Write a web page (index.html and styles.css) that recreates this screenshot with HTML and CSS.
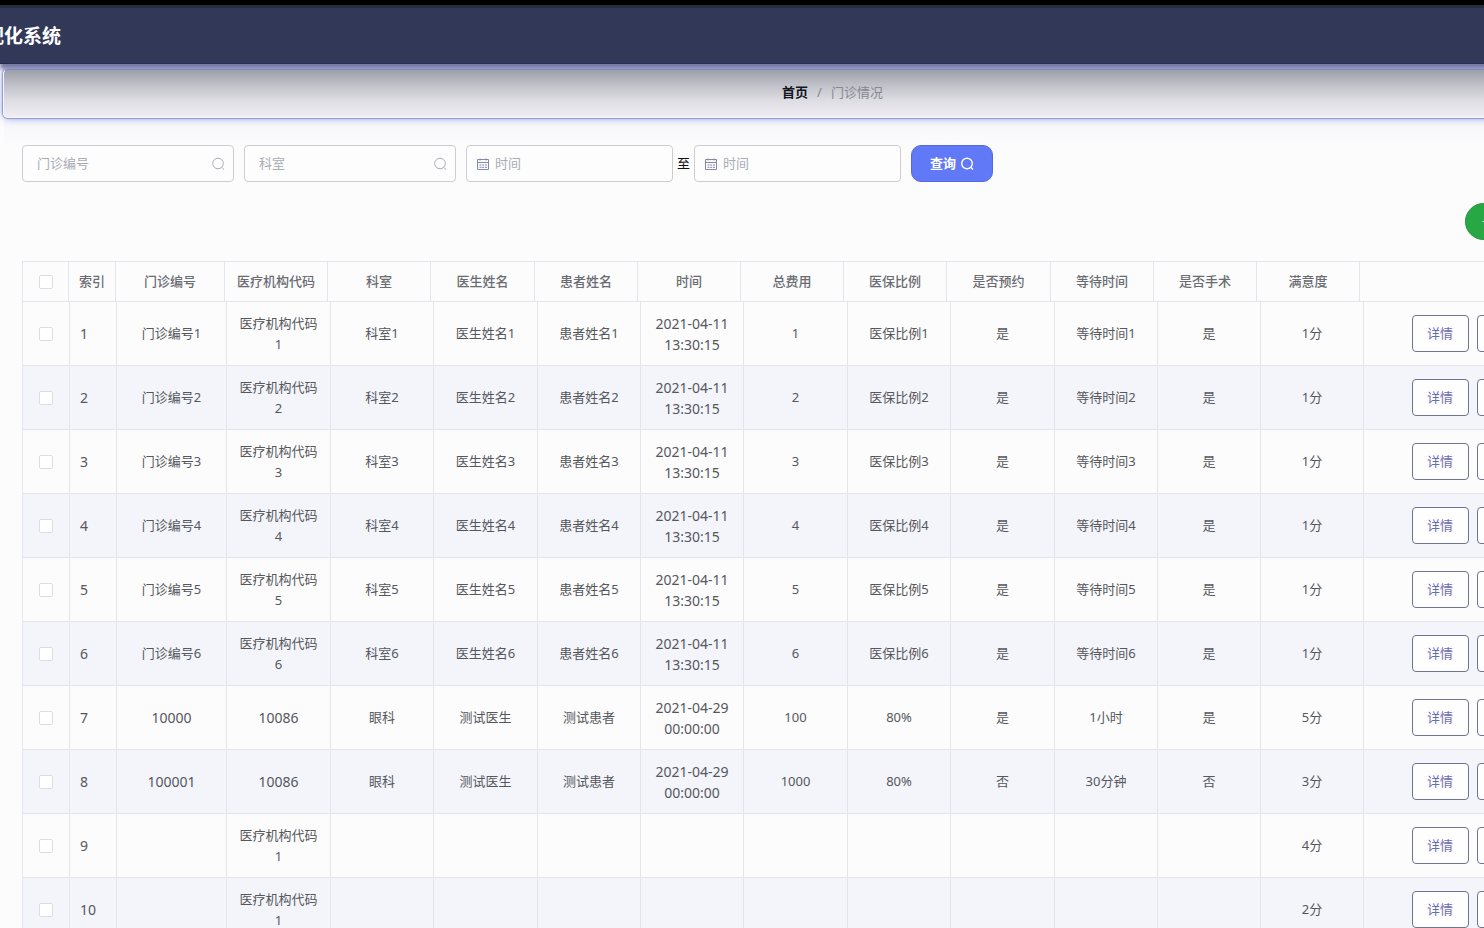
FILE: index.html
```html
<!DOCTYPE html>
<html lang="zh-CN">
<head>
  <meta charset="UTF-8">
  <meta name="viewport" content="width=device-width, initial-scale=1.0">
  <title>门诊情况</title>
  <link rel="stylesheet" href="styles.css">
</head>
<body>
  <div class="page">
    <header class="navbar">
      <h1 class="logo">视化系统</h1>
    </header>
    <nav class="breadcrumb">
      <a href="index.html">首页</a>
      <span class="separator">/</span>
      <span>门诊情况</span>
    </nav>
    <main>
      <form class="search-form">
        <div class="field">
          <input type="text" placeholder="门诊编号" aria-label="门诊编号">
          <svg class="icon" viewBox="0 0 14 14"><circle cx="7" cy="6.5" r="5.3"/><path d="M10.7 10.3L13 12.6"/></svg>
        </div>
        <div class="field">
          <input type="text" placeholder="科室" aria-label="科室">
          <svg class="icon" viewBox="0 0 14 14"><circle cx="7" cy="6.5" r="5.3"/><path d="M10.7 10.3L13 12.6"/></svg>
        </div>
        <div class="date-range">
          <div class="field date">
            <svg class="icon" viewBox="0 0 14 14"><path d="M1.5 2.5h11v10h-11zM1.5 5.5h11M4 1.5v2M10 1.5v2M3.5 8h2M6.2 8h2M9 8h2M3.5 10.3h2M6.2 10.3h2M9 10.3h2"/></svg>
            <input type="text" placeholder="时间" aria-label="开始时间">
          </div>
          <span>至</span>
          <div class="field date">
            <svg class="icon" viewBox="0 0 14 14"><path d="M1.5 2.5h11v10h-11zM1.5 5.5h11M4 1.5v2M10 1.5v2M3.5 8h2M6.2 8h2M9 8h2M3.5 10.3h2M6.2 10.3h2M9 10.3h2"/></svg>
            <input type="text" placeholder="时间" aria-label="结束时间">
          </div>
        </div>
        <button type="submit" class="btn-search">查询
          <svg class="icon" viewBox="0 0 14 14"><circle cx="7" cy="6.5" r="5.3"/><path d="M10.7 10.3L13 12.6"/></svg>
        </button>
      </form>
      <div class="toolbar">
        <button type="button" class="btn-add">+ 新增</button>
        <button type="button" class="btn-delete">删除</button>
      </div>
      <table class="table-head">
        <colgroup><col class="c-check"><col class="c-index"><col class="c-no"><col span="2" class="c-item"><col class="c-wide"><col span="4" class="c-item"><col class="c-wide"><col span="3" class="c-item"><col></colgroup>
        <thead>
          <tr>
            <th><input type="checkbox" aria-label="全选"></th><th class="index">索引</th><th>门诊编号</th><th>医疗机构代码</th><th>科室</th><th>医生姓名</th><th>患者姓名</th><th>时间</th><th>总费用</th><th>医保比例</th><th>是否预约</th><th>等待时间</th><th>是否手术</th><th>满意度</th><th></th>
          </tr>
        </thead>
      </table>
      <table class="table-body">
        <colgroup><col class="c-check"><col class="c-index"><col class="c-no"><col class="c-wide"><col class="c-item"><col class="c-wide"><col span="2" class="c-item"><col class="c-wide"><col class="c-item"><col class="c-wide"><col span="3" class="c-item"><col></colgroup>
        <tbody>
          <tr><td><input type="checkbox" aria-label="选择1"></td><td class="index">1</td><td>门诊编号1</td><td>医疗机构代码1</td><td>科室1</td><td>医生姓名1</td><td>患者姓名1</td><td class="num">2021-04-11 13:30:15</td><td>1</td><td>医保比例1</td><td>是</td><td>等待时间1</td><td>是</td><td>1分</td><td><div class="actions"><button type="button">详情</button><button type="button">修改</button><button type="button">删除</button></div></td></tr>
          <tr><td><input type="checkbox" aria-label="选择2"></td><td class="index">2</td><td>门诊编号2</td><td>医疗机构代码2</td><td>科室2</td><td>医生姓名2</td><td>患者姓名2</td><td class="num">2021-04-11 13:30:15</td><td>2</td><td>医保比例2</td><td>是</td><td>等待时间2</td><td>是</td><td>1分</td><td><div class="actions"><button type="button">详情</button><button type="button">修改</button><button type="button">删除</button></div></td></tr>
          <tr><td><input type="checkbox" aria-label="选择3"></td><td class="index">3</td><td>门诊编号3</td><td>医疗机构代码3</td><td>科室3</td><td>医生姓名3</td><td>患者姓名3</td><td class="num">2021-04-11 13:30:15</td><td>3</td><td>医保比例3</td><td>是</td><td>等待时间3</td><td>是</td><td>1分</td><td><div class="actions"><button type="button">详情</button><button type="button">修改</button><button type="button">删除</button></div></td></tr>
          <tr><td><input type="checkbox" aria-label="选择4"></td><td class="index">4</td><td>门诊编号4</td><td>医疗机构代码4</td><td>科室4</td><td>医生姓名4</td><td>患者姓名4</td><td class="num">2021-04-11 13:30:15</td><td>4</td><td>医保比例4</td><td>是</td><td>等待时间4</td><td>是</td><td>1分</td><td><div class="actions"><button type="button">详情</button><button type="button">修改</button><button type="button">删除</button></div></td></tr>
          <tr><td><input type="checkbox" aria-label="选择5"></td><td class="index">5</td><td>门诊编号5</td><td>医疗机构代码5</td><td>科室5</td><td>医生姓名5</td><td>患者姓名5</td><td class="num">2021-04-11 13:30:15</td><td>5</td><td>医保比例5</td><td>是</td><td>等待时间5</td><td>是</td><td>1分</td><td><div class="actions"><button type="button">详情</button><button type="button">修改</button><button type="button">删除</button></div></td></tr>
          <tr><td><input type="checkbox" aria-label="选择6"></td><td class="index">6</td><td>门诊编号6</td><td>医疗机构代码6</td><td>科室6</td><td>医生姓名6</td><td>患者姓名6</td><td class="num">2021-04-11 13:30:15</td><td>6</td><td>医保比例6</td><td>是</td><td>等待时间6</td><td>是</td><td>1分</td><td><div class="actions"><button type="button">详情</button><button type="button">修改</button><button type="button">删除</button></div></td></tr>
          <tr><td><input type="checkbox" aria-label="选择7"></td><td class="index">7</td><td class="num">10000</td><td class="num">10086</td><td>眼科</td><td>测试医生</td><td>测试患者</td><td class="num">2021-04-29 00:00:00</td><td>100</td><td>80%</td><td>是</td><td>1小时</td><td>是</td><td>5分</td><td><div class="actions"><button type="button">详情</button><button type="button">修改</button><button type="button">删除</button></div></td></tr>
          <tr><td><input type="checkbox" aria-label="选择8"></td><td class="index">8</td><td class="num">100001</td><td class="num">10086</td><td>眼科</td><td>测试医生</td><td>测试患者</td><td class="num">2021-04-29 00:00:00</td><td>1000</td><td>80%</td><td>否</td><td>30分钟</td><td>否</td><td>3分</td><td><div class="actions"><button type="button">详情</button><button type="button">修改</button><button type="button">删除</button></div></td></tr>
          <tr><td><input type="checkbox" aria-label="选择9"></td><td class="index">9</td><td></td><td>医疗机构代码1</td><td></td><td></td><td></td><td></td><td></td><td></td><td></td><td></td><td></td><td>4分</td><td><div class="actions"><button type="button">详情</button><button type="button">修改</button><button type="button">删除</button></div></td></tr>
          <tr><td><input type="checkbox" aria-label="选择10"></td><td class="index">10</td><td></td><td>医疗机构代码1</td><td></td><td></td><td></td><td></td><td></td><td></td><td></td><td></td><td></td><td>2分</td><td><div class="actions"><button type="button">详情</button><button type="button">修改</button><button type="button">删除</button></div></td></tr>
        </tbody>
      </table>
    </main>
  </div>
</body>
</html>
```

FILE: styles.css
```css
* { box-sizing: border-box; }
body { margin: 0; height: 100vh; overflow: hidden; background: #fcfcfd; font-family: "Noto Sans", "Noto Sans CJK SC", sans-serif; font-size: 13px; line-height: 21px; color: #55575c; }
button, input { font: inherit; }
.page { width: 112%; border-top: 5px solid #000; }

/* top bar */
.navbar { display: flex; align-items: center; height: 59px; background: #323858; border-top: 3px solid #292c3a; border-bottom: 1px solid #252a4c; box-shadow: 0 5px 4px #7a7d9c; }
.logo { display: flex; justify-content: flex-end; width: 61px; margin: 0; overflow: hidden; white-space: nowrap; font-size: 19px; line-height: 28px; font-weight: 700; color: #fff; }

.breadcrumb { position: relative; display: flex; align-items: center; justify-content: center; gap: 9px; height: 49px; margin: 5px 0 0 3px; padding: 0 0 2px; border: 1px solid #f6f6fc; border-top-color: #8587b4; border-radius: 5px; background: linear-gradient(#9da0aa, #c3c3cb 35%, #dedde3 65%, #efedf3); box-shadow: 0 0 1px 1px #8f97cd, 0 0 8px rgba(90, 105, 220, 0.6); color: #858791; }
.breadcrumb a { color: #111421; font-weight: 700; text-decoration: none; }
.separator { color: #858791; }

main { padding: 27px 15px 0 18px; margin-left: 4px; background: linear-gradient(#f6f6fb, #fcfcfd 30px); }

/* search */
.search-form { display: flex; gap: 10px; }
.field { display: flex; align-items: center; width: 212px; height: 37px; padding: 0 8px 0 14px; border: 1px solid #cdccd2; border-radius: 4px; background: #fdfdfe; color: #a9acb6; }
.field input { flex: 1; min-width: 0; padding: 0; border: 0; outline: 0; background: none; color: #606266; }
.field input::placeholder { color: #a9acb3; opacity: 1; }
.icon { width: 14px; height: 14px; flex: none; fill: none; stroke: currentColor; stroke-width: 1; }
.date-range { display: flex; align-items: center; gap: 4px; color: #111; }
.date { width: 207px; padding: 0 9px; }
.date .icon { margin-right: 5px; color: #8388ac; }
.btn-search { display: flex; align-items: center; justify-content: center; gap: 4px; width: 82px; height: 37px; padding: 0; border: 1px solid #5569e3; border-radius: 10px; background: #6179f6; color: #fff; font-weight: 700; }
.btn-search .icon { stroke-width: 1.4; }

.toolbar { display: flex; justify-content: flex-end; gap: 10px; padding: 21px 0; }
.toolbar button { width: 86px; height: 37px; padding: 0 16px; border: 1px solid #24933a; border-radius: 20px; background: #28a745; color: #fff; text-align: left; }
.toolbar .btn-delete { border-color: #d9534f; background: #e35d6a; }

/* table */
table { width: 100%; table-layout: fixed; border-collapse: separate; border-spacing: 0; border-left: 1px solid #e3e4ec; }
.table-head { border-top: 1px solid #e3e4ec; }
th, td { padding: 0 10px; border-right: 1px solid #e3e4ec; border-bottom: 1px solid #e3e4ec; text-align: center; }
th { height: 40px; font-weight: 500; color: #6a6c71; white-space: nowrap; }
td { height: 64px; }
.index { text-align: left; }
.num, td.index { font-size: 14px; }
tbody tr:nth-child(even) { background: #f3f5fb; }
.c-check, .c-index { width: 47px; }
.table-head .c-check { width: 46px; }
.c-no { width: 110px; }
.table-head .c-no { width: 109px; }
.c-item { width: 103px; }
.c-wide { width: 104px; }
input[type="checkbox"] { appearance: none; display: block; width: 14px; height: 14px; margin: 0 auto; border: 1px solid #dcdde3; border-radius: 2px; background: #fff; }

.actions { display: flex; justify-content: center; gap: 8px; }
.actions button { width: 57px; height: 37px; padding: 0; border: 1px solid #71748f; border-radius: 4px; background: #fefeff; color: #6a6cb2; }
```
